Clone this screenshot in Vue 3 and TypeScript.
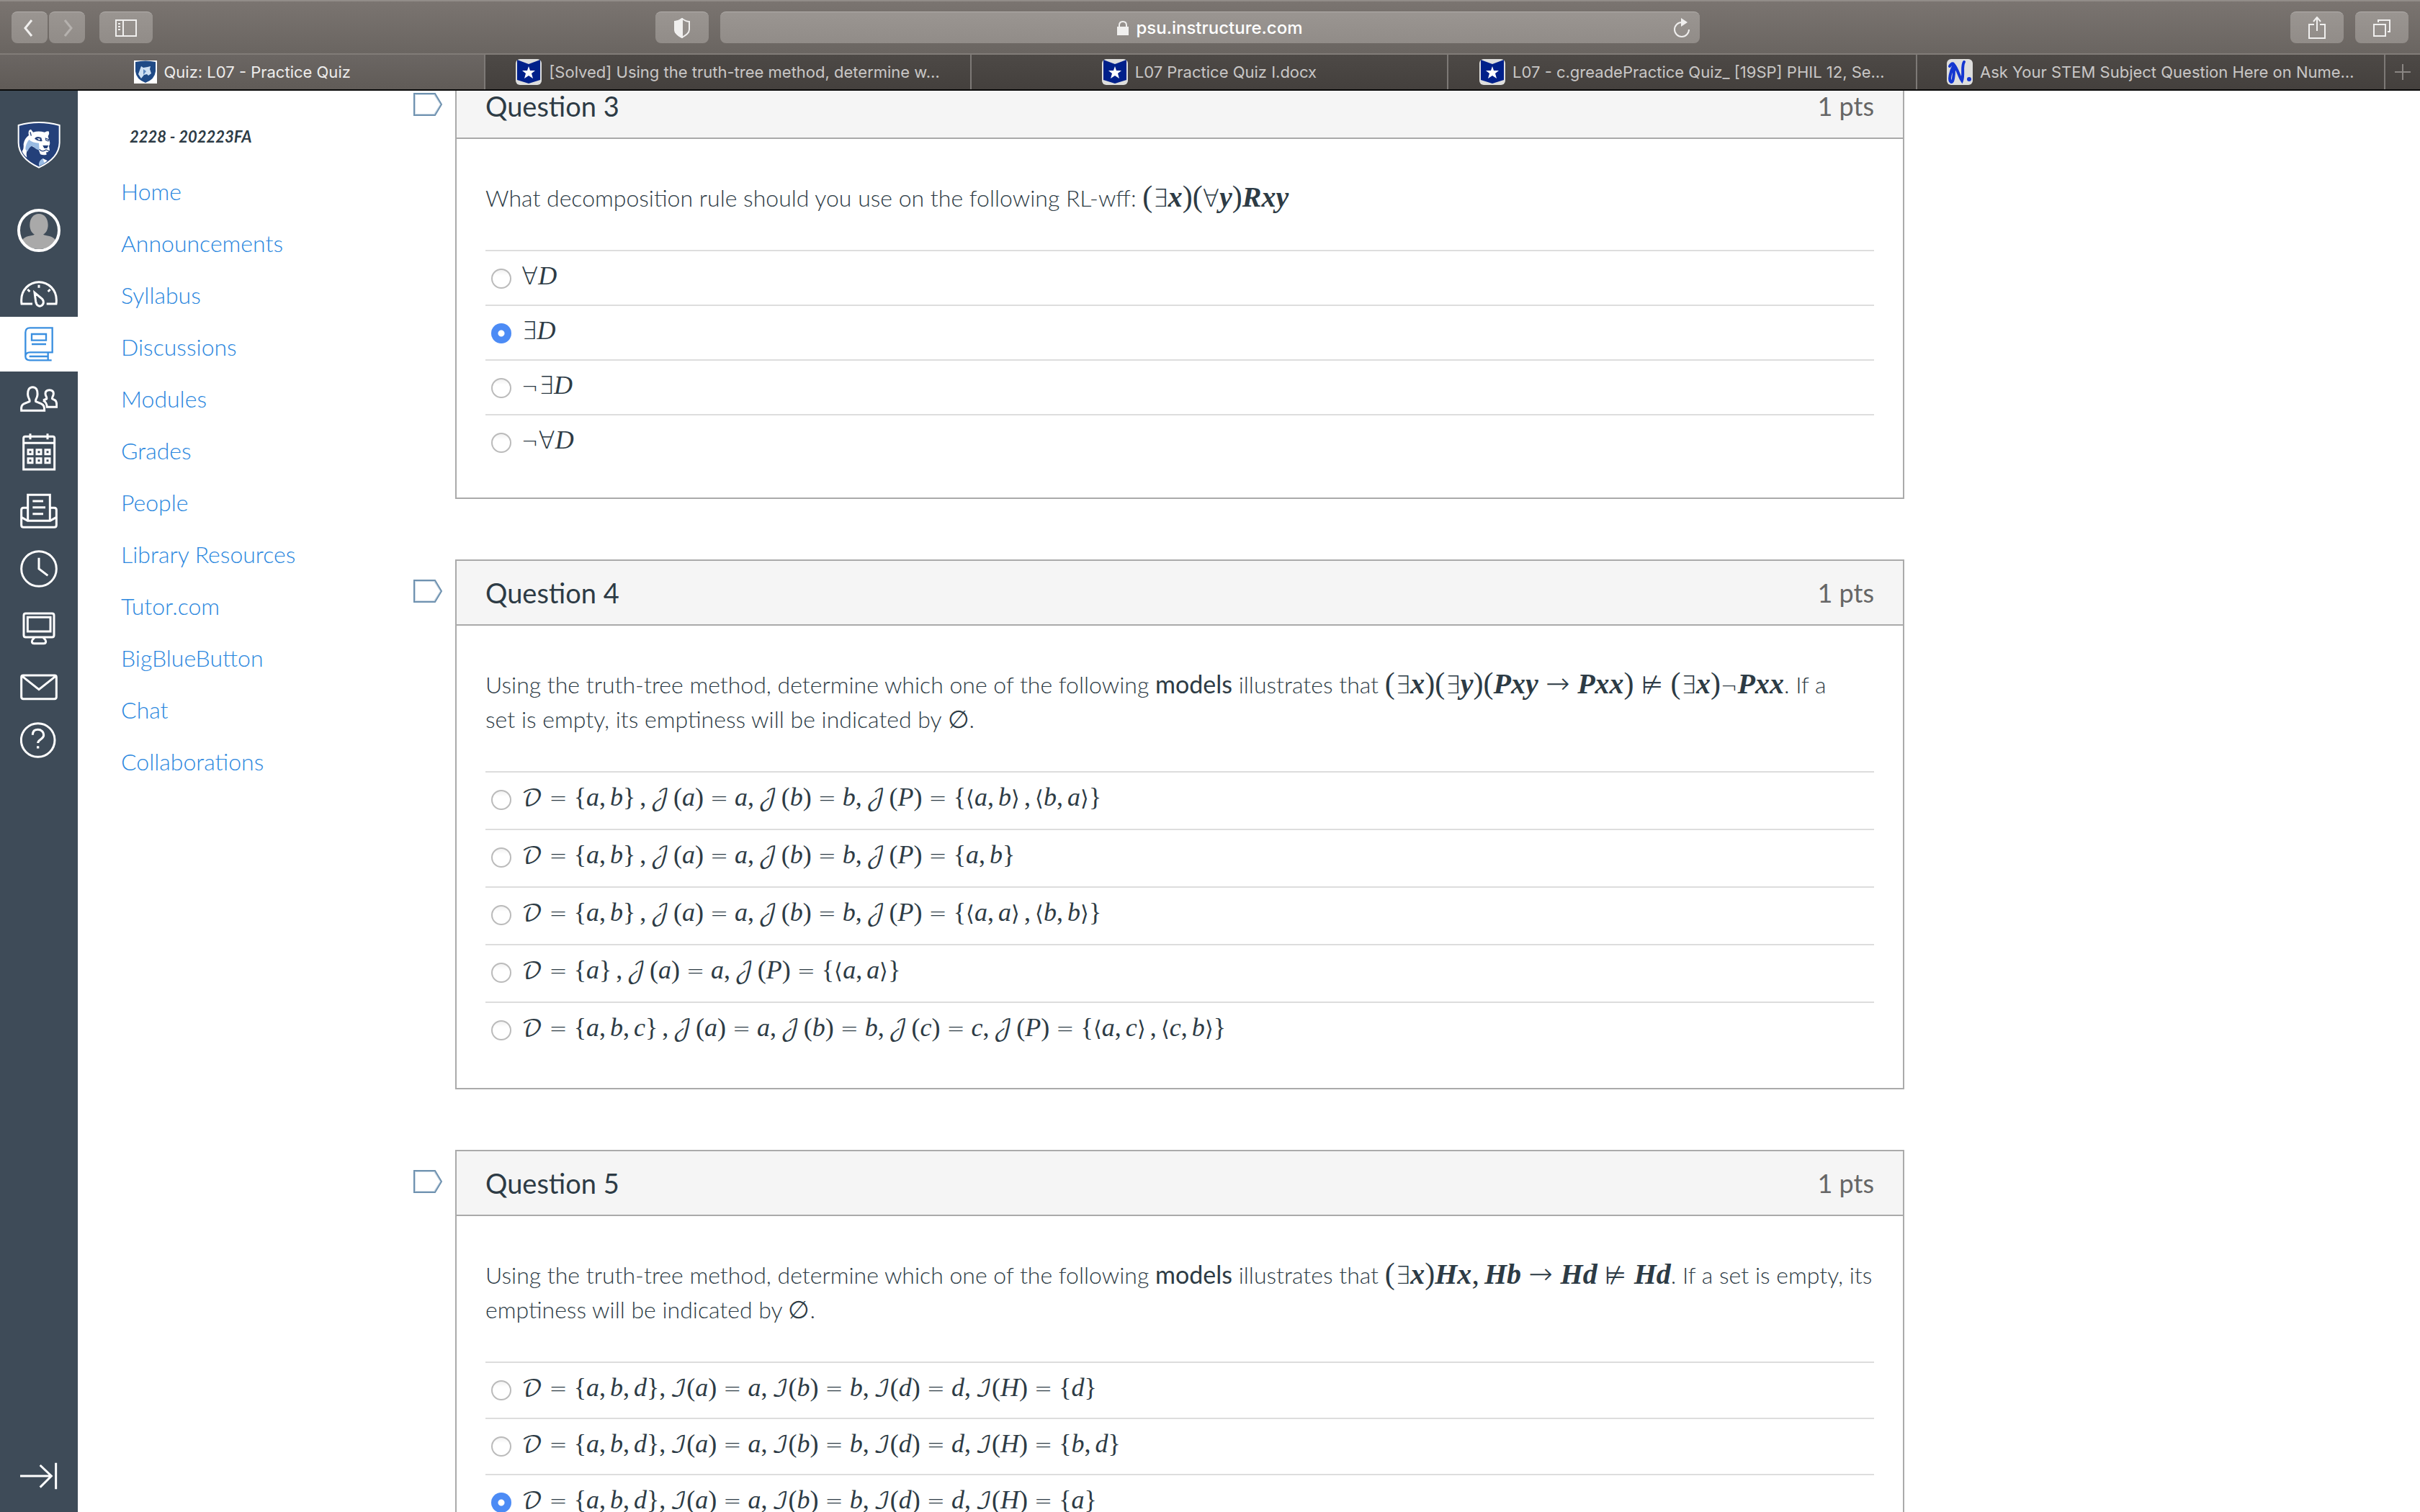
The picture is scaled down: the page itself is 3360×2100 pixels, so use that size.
<script setup lang="ts">
import { ref } from 'vue'

type Segment = { kind: 'text' | 'strong' | 'math'; value: string }
type Piece = { kind: string; value: string }
type Question = {
  id: number
  rowHeight: number
  prompt: Segment[]
  answers: string[]
}

const tabs = [
  { title: 'Quiz: L07 - Practice Quiz', icon: 'lion', grow: 337 },
  { title: '[Solved] Using the truth-tree method, determine w…', icon: 'star', grow: 337 },
  { title: 'L07 Practice Quiz I.docx', icon: 'star', grow: 331 },
  { title: 'L07 - c.greadePractice Quiz_ [19SP] PHIL 12, Se…', icon: 'star', grow: 325 },
  { title: 'Ask Your STEM Subject Question Here on Nume…', icon: 'n', grow: 325 },
]

const rail = [
  {
    label: 'Dashboard',
    height: 64,
    path: 'M51 120H6C5 115 5 110 5 104C5 62 38 29 78 29s73 33 73 75c0 6 0 11-1 16H110M60 73L65 110C68 128 80 133 90 127C100 120 98 107 92 100ZM78 41V53M31 60L40 69M125 60L116 69',
  },
  {
    label: 'Courses',
    height: 76,
    active: true,
    path: 'M22 129V29q0-19 19-19H134V112H41q-19 0-19 17q0 16 19 16H131M38 129H116M116 112V145M48 36H108V62H48ZM48 78H108',
  },
  {
    label: 'Groups',
    height: 76,
    path: 'M5 127H101c0-18-3-24-14-29l-22-9c-3-10 6-12 7-28 1-20-5-32-20-32s-21 12-20 32c1 16 10 18 7 28l-22 9c-11 5-13 12-12 29zM96 84l14-6c3-6-5-12-5-22 0-10 6-15 17-15s17 5 17 15c0 10-8 16-5 22l10 5c8 4 9 13 8 29H112c-1-14-4-20-16-28',
  },
  {
    label: 'Calendar',
    height: 72,
    path: 'M14 150V20q0-7 7-7H136q7 0 7 7V150ZM14 40H143M42 1V25M114 1V25M33 68H51V86H33ZM69 68H87V86H69ZM105 68H123V86H105ZM33 104H51V122H33ZM69 104H87V122H69ZM105 104H123V122H105Z',
  },
  {
    label: 'Inbox',
    height: 92,
    path: 'M32 118V10H124V118M32 64H14q-9 0-9 9V136q0 9 9 9H142q9 0 9-9V73q0-9-9-9H124M5 103L31 118H125L151 103M52 36H96M52 62H105M52 89H96',
  },
  {
    label: 'History',
    height: 68,
    path: 'M5 78a73 73 0 1 0 146 0a73 73 0 1 0-146 0M78 32V78L115 106',
  },
  {
    label: 'Studio',
    height: 98,
    path: 'M23 15H133q8 0 8 8V106q0 8-8 8H23q-8 0-8-8V23q0-8 8-8ZM31 31H126V90H31ZM60 114c0 6-11 7-11 17 0 6 3 9 9 9H98c6 0 9-3 9-9 0-10-11-11-11-17',
  },
  {
    label: 'Mail',
    height: 64,
    path: 'M13 30H143q8 0 8 8V120q0 8-8 8H13q-8 0-8-8V38q0-8 8-8ZM9 34L78 89L147 34',
  },
  {
    label: 'Help',
    height: 84,
    path: 'M4 78a70 70 0 1 0 140 0a70 70 0 1 0-140 0M52 56c0-15 9-22 22-22s24 9 24 23c0 18-24 18-24 33M74 103v9M69 108h10',
  },
]

const courseLinks = [
  'Home',
  'Announcements',
  'Syllabus',
  'Discussions',
  'Modules',
  'Grades',
  'People',
  'Library Resources',
  'Tutor.com',
  'BigBlueButton',
  'Chat',
  'Collaborations',
]

const modelPrompt = (formula: string): Segment[] => [
  { kind: 'text', value: 'Using the truth-tree method, determine which one of the following ' },
  { kind: 'strong', value: 'models' },
  { kind: 'text', value: ' illustrates that ' },
  { kind: 'math', value: formula },
  { kind: 'text', value: '. If a set\u00a0is empty, its emptiness will be indicated by ' },
  { kind: 'math', value: '∅' },
  { kind: 'text', value: '.' },
]

const questions: Question[] = [
  {
    id: 3,
    rowHeight: 76,
    prompt: [
      { kind: 'text', value: 'What decomposition rule should you use on the following RL-wff: ' },
      { kind: 'math', value: '(∃x)(∀y)Rxy' },
    ],
    answers: ['∀D', '∃D', '¬∃D', '¬∀D'],
  },
  {
    id: 4,
    rowHeight: 80,
    prompt: modelPrompt('(∃x)(∃y)(Pxy → Pxx) ⊭ (∃x)¬Pxx'),
    answers: [
      '𝒟 = {a, b} , 𝒥 (a) = a, 𝒥 (b) = b, 𝒥 (P) = {⟨a, b⟩ , ⟨b, a⟩}',
      '𝒟 = {a, b} , 𝒥 (a) = a, 𝒥 (b) = b, 𝒥 (P) = {a, b}',
      '𝒟 = {a, b} , 𝒥 (a) = a, 𝒥 (b) = b, 𝒥 (P) = {⟨a, a⟩ , ⟨b, b⟩}',
      '𝒟 = {a} , 𝒥 (a) = a, 𝒥 (P) = {⟨a, a⟩}',
      '𝒟 = {a, b, c} , 𝒥 (a) = a, 𝒥 (b) = b, 𝒥 (c) = c, 𝒥 (P) = {⟨a, c⟩ , ⟨c, b⟩}',
    ],
  },
  {
    id: 5,
    rowHeight: 78,
    prompt: modelPrompt('(∃x)Hx, Hb → Hd ⊭ Hd'),
    answers: [
      '𝒟 = {a, b, d}, ℐ(a) = a, ℐ(b) = b, ℐ(d) = d, ℐ(H) = {d}',
      '𝒟 = {a, b, d}, ℐ(a) = a, ℐ(b) = b, ℐ(d) = d, ℐ(H) = {b, d}',
      '𝒟 = {a, b, d}, ℐ(a) = a, ℐ(b) = b, ℐ(d) = d, ℐ(H) = {a}',
    ],
  },
]

const chosen = ref<Record<number, number>>({ 3: 1, 5: 2 })

// Splits a formula into variables, script capitals, logical symbols and punctuation.
// Spaces beside a comma or before a bracket are thin; those around a relation stay full.
function pieces(formula: string): Piece[] {
  const spaced = formula
    .replace(/ , /g, '\u2006,\u2006')
    .replace(/, /g, ',\u2006')
    .replace(/([𝒥]) \(/gu, '$1\u2006(')
  const found = spaced.match(/[A-Za-z]+|[𝒟𝒥ℐ]|[=⟨⟩]|[¬∅→]|[∃∀⊭]|[^A-Za-z𝒟𝒥ℐ∃∀¬→⊭=∅⟨⟩]+/gu) ?? []
  return found.map((value) => {
    if (/^[A-Za-z]/.test(value)) return { kind: 'var', value }
    if (/^[𝒟𝒥ℐ]/u.test(value)) return { kind: 'script', value }
    if (/^[=⟨⟩]/.test(value)) return { kind: 'sym rel', value }
    if (value === '¬') return { kind: 'sym not', value }
    if (value === '→') return { kind: 'sym arrow', value }
    if (/^[∃∀⊭]/.test(value)) return { kind: 'sym', value }
    if (value === '∅') return { kind: 'empty', value }
    return { kind: 'punct', value }
  })
}
</script>

<template>
  <div class="window">
    <header class="toolbar">
      <div class="tools">
        <button class="tool half" aria-label="Back">
          <svg viewBox="0 0 24 24"><path d="M15 1L6 12L15 23" /></svg>
        </button>
        <button class="tool half dim" aria-label="Forward">
          <svg viewBox="0 0 24 24"><path d="M9 1L18 12L9 23" /></svg>
        </button>
        <button class="tool side" aria-label="Sidebar">
          <svg class="wide" viewBox="0 0 30 24">
            <path d="M1 1H29V23H1ZM11 1V23M4 6H7M4 10H7M4 14H7" />
          </svg>
        </button>
        <button class="tool shield" aria-label="Privacy report">
          <svg class="tall" viewBox="0 0 24 28">
            <path d="M12 1C9 3 5 5 2 5V16C2 21 7 24 12 27C17 24 22 21 22 16V5C19 5 15 3 12 1Z" />
            <path class="solid" d="M12 1C9 3 5 5 2 5V16C2 21 7 24 12 27Z" />
          </svg>
        </button>
      </div>
      <div class="address">
        <span class="site">
          <svg class="lock" viewBox="0 0 16 20">
            <path class="solid flat" d="M0 8H16V20H0Z" />
            <path d="M3 9V6Q3 1 8 1T13 6V9" />
          </svg>
          psu.instructure.com
        </span>
        <button class="reload" aria-label="Reload">
          <svg viewBox="0 0 26 28">
            <path d="M13 6A10 10 0 1 0 23 16" />
            <path class="solid flat" d="M12 0L21 6L12 12Z" />
          </svg>
        </button>
      </div>
      <div class="tools end">
        <button class="tool" aria-label="Share">
          <svg class="share" viewBox="0 0 24 32">
            <path d="M8 11H1V30H23V11H16M12 20V2M7 7L12 1L17 7" />
          </svg>
        </button>
        <button class="tool" aria-label="Show all tabs">
          <svg viewBox="0 0 24 24"><path d="M1 7H17V23H1ZM7 4V1H23V17H20" /></svg>
        </button>
      </div>
    </header>

    <nav class="tabs" aria-label="Tabs">
      <a
        v-for="(tab, i) in tabs"
        :key="tab.title"
        href="#"
        class="tab"
        :class="{ current: i === 0 }"
        :style="{ flexGrow: tab.grow }"
      >
        <svg v-if="tab.icon === 'lion'" class="fav small" viewBox="0 0 32 32">
          <path fill="#fff" d="M0 0H32V32H0Z" />
          <path fill="#1f4a86" d="M2 2Q16-1 30 2V15Q29 26 16 31Q3 26 2 15Z" />
          <path fill="#cfe0f2" d="M10 8L13 10L19 9L23 8L22 12L24 18L20 21L18 19L14 20L10 25L6 19Z" />
          <path fill="#5b86bd" d="M13 12L17 15L13 20Z" />
        </svg>
        <svg v-else-if="tab.icon === 'star'" class="fav" viewBox="0 0 36 36">
          <rect width="36" height="36" rx="6" fill="#dededd" />
          <path fill="#00208a" d="M2 1L18 7L34 1V29L18 34L2 29Z" />
          <path fill="#fff" d="M18 10L20 16H27L22 20L24 27L18 23L12 27L14 20L9 16H16Z" />
        </svg>
        <svg v-else class="fav" viewBox="0 0 36 36">
          <rect width="36" height="36" rx="6" fill="#dededd" />
          <path
            fill="none"
            stroke="#1436d0"
            stroke-width="4"
            stroke-linecap="round"
            d="M4 10C7 5 11 4 10 14C10 22 9 33 6 32C2 30 5 17 10 8C15 14 17 24 21 30C24 22 20 10 24 4"
          />
          <circle cx="31" cy="28" r="3" fill="#1436d0" />
        </svg>
        <span>{{ tab.title }}</span>
      </a>
      <button class="new-tab" aria-label="New tab">
        <svg viewBox="0 0 22 22"><path d="M11 0V22M0 11H22" /></svg>
      </button>
    </nav>

    <div class="page">
      <nav class="rail" aria-label="Global">
        <a href="#" class="logo" aria-label="Penn State">
          <svg viewBox="72 147 180 195">
            <path
              fill="#24407a"
              stroke="#fff"
              stroke-width="6"
              d="M77 162Q162 138 248 162V235Q246 300 162 338Q78 300 77 235Z"
            />
            <path
              fill="#fff"
              d="M120 204Q115 180 129 179L138 191Q160 184 186 191Q200 184 204 188Q207 198 200 208L208 235Q208 244 204 248L207 266Q200 276 192 274L194 284Q180 288 168 283L160 262L138 252Q124 240 112 266Q108 282 112 296Q96 284 92 270Q100 262 98 240Q102 216 120 204Z"
            />
            <path fill="#99bbe3" d="M121 222Q136 236 162 236L164 266Q150 264 138 250Q126 244 114 272L106 262Q106 240 121 222Z" />
            <path fill="#99bbe3" d="M162 330Q160 308 180 300Q182 314 190 310L194 314Q180 326 162 332Z" />
            <path fill="#fff" d="M178 300L184 318L198 310Z" />
            <path
              fill="#24407a"
              d="M144 218Q150 204 172 214L176 228Q160 232 144 218ZM188 214L204 220L202 230L190 226ZM178 246H202L196 258H184Z"
            />
            <path fill="none" stroke="#24407a" stroke-width="4" d="M164 262Q176 276 192 264L206 270M130 206L126 190" />
            <path fill="#fff" d="M154 216L168 218L164 225ZM192 218L200 222L196 227Z" />
          </svg>
        </a>
        <a href="#" class="avatar" aria-label="Account">
          <svg viewBox="0 0 180 180">
            <path
              fill="#a9a9a9"
              d="M90 21c24 0 38 20 38 46 0 20-8 34-20 40 12 6 40 4 52 24A80 80 0 0 1 90 168A80 80 0 0 1 20 131c12-20 40-18 52-24-12-6-20-20-20-40 0-26 14-46 38-46z"
            />
            <circle cx="90" cy="90" r="84" fill="none" stroke="#fff" stroke-width="12" />
          </svg>
        </a>
        <a
          v-for="item in rail"
          :key="item.label"
          href="#"
          class="rail-item"
          :class="{ active: item.active }"
          :style="{ height: item.height + 'px' }"
          :aria-label="item.label"
        >
          <svg viewBox="0 0 156 156"><path :d="item.path" /></svg>
        </a>
        <button class="rail-item collapse" aria-label="Expand navigation">
          <svg viewBox="0 0 156 156"><path d="M0 78H130M83 33L130 78L83 125M149 23V133" /></svg>
        </button>
      </nav>

      <nav class="course" aria-label="Course">
        <p class="term">2228 - 202223FA</p>
        <a v-for="link in courseLinks" :key="link" href="#">{{ link }}</a>
      </nav>

      <main class="quiz">
        <section v-for="q in questions" :key="q.id" class="question">
          <button class="flag" :aria-label="'Flag question ' + q.id">
            <svg viewBox="0 0 40 32">
              <path class="pale" d="M2 30V2H29L38 16L29 30Z" />
              <path d="M1 31V1H30L39 16L30 31Z" />
            </svg>
          </button>
          <div class="card">
            <header class="card-head">
              <h2>Question {{ q.id }}</h2>
              <span class="points">1 pts</span>
            </header>
            <div class="body">
              <p class="prompt">
                <template v-for="(s, i) in q.prompt" :key="i">
                  <strong v-if="s.kind === 'strong'">{{ s.value }}</strong>
                  <span v-else-if="s.kind === 'math'" class="math"
                    ><span v-for="(p, k) in pieces(s.value)" :key="k" :class="p.kind">{{ p.value }}</span></span
                  >
                  <template v-else>{{ s.value }}</template>
                </template>
              </p>
              <label
                v-for="(answer, n) in q.answers"
                :key="n"
                class="answer"
                :style="{ height: q.rowHeight + 'px' }"
              >
                <input v-model="chosen[q.id]" type="radio" :name="'question-' + q.id" :value="n" />
                <span class="math"
                  ><span v-for="(p, k) in pieces(answer)" :key="k" :class="p.kind">{{ p.value }}</span></span
                >
              </label>
            </div>
          </div>
        </section>
      </main>
    </div>
  </div>
</template>

<style>
body {
  margin: 0;
  background: #fff;
}
</style>

<style scoped>
.window {
  display: flex;
  flex-direction: column;
  height: 100vh;
  overflow: hidden;
  font-family: Lato, sans-serif;
  color: #2d3b45;
}
* {
  box-sizing: border-box;
}
button {
  border: 0;
  padding: 0;
  background: none;
  font: inherit;
}
a {
  text-decoration: none;
}
svg {
  display: block;
}

/* Browser chrome */
.toolbar {
  display: grid;
  grid-template-columns: 1fr 40.5vw 1fr;
  align-items: center;
  gap: 16px;
  height: 76px;
  padding: 0 16px;
  flex: none;
  background: linear-gradient(#7a7470, #6a6561);
  border-top: 2px solid #928d89;
  border-bottom: 2px solid #817c78;
}
.tools {
  display: flex;
  gap: 16px;
}
.tools.end {
  justify-content: flex-end;
}
.tool {
  display: flex;
  align-items: center;
  justify-content: center;
  width: 74px;
  height: 44px;
  border-radius: 8px;
  background: linear-gradient(#9a9591, #918c88);
  border-top: 1px solid #b3afac;
}
.tool svg,
.reload svg,
.lock {
  width: 24px;
  height: 24px;
  fill: none;
  stroke: #f0efee;
  stroke-width: 2;
}
.tool .wide {
  width: 30px;
}
.tool .tall {
  height: 28px;
}
.tool .share {
  height: 32px;
}
.tool.half {
  width: 50px;
}
.half svg {
  stroke-width: 3;
}
.half + .half {
  margin-left: -14px;
}
.dim svg {
  stroke: #b5b1ae;
}
.side {
  margin-left: 4px;
}
.shield {
  margin-left: auto;
}
svg .solid {
  fill: #f0efee;
}
svg .flat {
  stroke: none;
}
.address {
  display: flex;
  align-items: center;
  height: 44px;
  padding-right: 12px;
  border-radius: 8px;
  background: linear-gradient(#9a9591, #918c88);
  border-top: 1px solid #b3afac;
}
.site {
  display: flex;
  align-items: center;
  justify-content: center;
  gap: 10px;
  flex: 1;
  padding-left: 38px;
  font: 500 24px/32px Inter, sans-serif;
  color: #fff;
}
.lock {
  width: 16px;
  height: 20px;
}
.reload svg {
  width: 26px;
  height: 28px;
}
.tabs {
  display: flex;
  flex: none;
  height: 50px;
  border-bottom: 2px solid #0a0a0a;
  background: linear-gradient(#4d4946, #44403d);
}
.tab {
  display: flex;
  align-items: center;
  justify-content: center;
  gap: 10px;
  flex: 1 1 0;
  min-width: 0;
  border-right: 2px solid #7d7976;
  font: 400 22px/32px Inter, sans-serif;
  color: #c9c7c6;
  white-space: nowrap;
}
.tab.current {
  background: linear-gradient(#6b6663, #605b57);
  color: #eeedec;
}
.fav {
  flex: none;
  width: 36px;
  height: 36px;
}
.fav.small {
  width: 32px;
  height: 32px;
}
.new-tab {
  display: flex;
  align-items: center;
  justify-content: center;
  width: 48px;
}
.new-tab svg {
  width: 22px;
  height: 22px;
  stroke: #8a8683;
  stroke-width: 2;
}

/* Global navigation rail */
.page {
  display: flex;
  flex: 1;
  min-height: 0;
}
.rail {
  display: flex;
  flex-direction: column;
  align-items: center;
  flex: none;
  width: 108px;
  background: #3e4b58;
}
.logo {
  margin-top: 43px;
}
.logo svg {
  width: 60px;
  height: 65px;
}
.avatar {
  margin: 56px 0 26px;
}
.avatar svg {
  width: 60px;
  height: 60px;
}
.rail-item {
  display: flex;
  align-items: center;
  justify-content: center;
  width: 100%;
}
.rail-item svg {
  width: 52px;
  height: 52px;
  fill: none;
  stroke: #fff;
  stroke-width: 9;
}
.rail-item.active {
  background: #fff;
}
.active svg {
  stroke: #3a8fe0;
  stroke-width: 7;
}
.collapse {
  height: 100px;
  margin-top: auto;
}

/* Course navigation */
.course {
  display: flex;
  flex-direction: column;
  flex: none;
  width: 466px;
  padding: 48px 0 0 60px;
}
.term {
  margin: 0 0 24px 12px;
  font: italic 700 22px/32px Lato, sans-serif;
}
.course a {
  font-size: 32px;
  font-weight: 300;
  line-height: 72px;
  color: #2b87de;
}

/* Quiz */
.quiz {
  flex: 1;
  min-width: 0;
  margin-right: 716px;
  overflow: hidden;
}
.question {
  display: flex;
  align-items: flex-start;
  gap: 18px;
  margin-bottom: 84px;
}
.question:first-child {
  margin-top: -25px;
}
.flag {
  flex: none;
  margin-top: 28px;
}
.flag svg {
  width: 40px;
  height: 32px;
  fill: none;
  stroke: #6f92b0;
  stroke-width: 2;
}
.flag .pale {
  stroke: #c9d7e3;
}
.card {
  flex: 1;
  min-width: 0;
  border: 2px solid #aaa;
}
.card-head {
  display: flex;
  align-items: center;
  justify-content: space-between;
  height: 90px;
  padding: 0 40px;
  background: #f5f5f5;
  border-bottom: 2px solid #aaa;
}
h2 {
  margin: 0;
  font-size: 38px;
  font-weight: 400;
  line-height: 48px;
}
.points {
  font-size: 36px;
  line-height: 48px;
  color: #666;
}
.body {
  padding: 58px 40px 40px;
}
.prompt {
  margin: 0 0 48px;
  font-size: 32px;
  font-weight: 300;
  line-height: 48px;
}
strong {
  font-size: 34px;
  font-weight: 400;
  line-height: 24px;
}
.answer {
  display: flex;
  align-items: flex-start;
  gap: 14px;
  padding: 24px 0 0 8px;
  border-top: 2px solid #ddd;
}
input {
  appearance: none;
  flex: none;
  width: 28px;
  height: 28px;
  margin: 0;
  border: 2px solid #bbb;
  border-radius: 50%;
  background: linear-gradient(#f2f2f2, #fff 30%);
}
input:checked {
  border: 0;
  background: radial-gradient(circle, #fff 4px, #4c8bf5 5px);
}
.math {
  font-family: 'Liberation Serif', serif;
  font-size: 36px;
  font-weight: 400;
  line-height: 20px;
  white-space: nowrap;
}
.prompt .math {
  font-size: 40px;
}
.var {
  font-style: italic;
}
.prompt .var {
  font-weight: 700;
}
.prompt .punct {
  font-size: 42px;
}
.sym {
  font-family: 'DejaVu Sans', sans-serif;
  font-size: 34px;
  font-weight: 200;
}
.sym.rel {
  font-size: 30px;
}
.sym.not {
  font-size: 28px;
}
.sym.arrow {
  font-size: 40px;
}
.script {
  font-family: 'DejaVu Math TeX Gyre', 'DejaVu Serif', serif;
  font-size: 32px;
}
.empty {
  font-size: 34px;
}
</style>
